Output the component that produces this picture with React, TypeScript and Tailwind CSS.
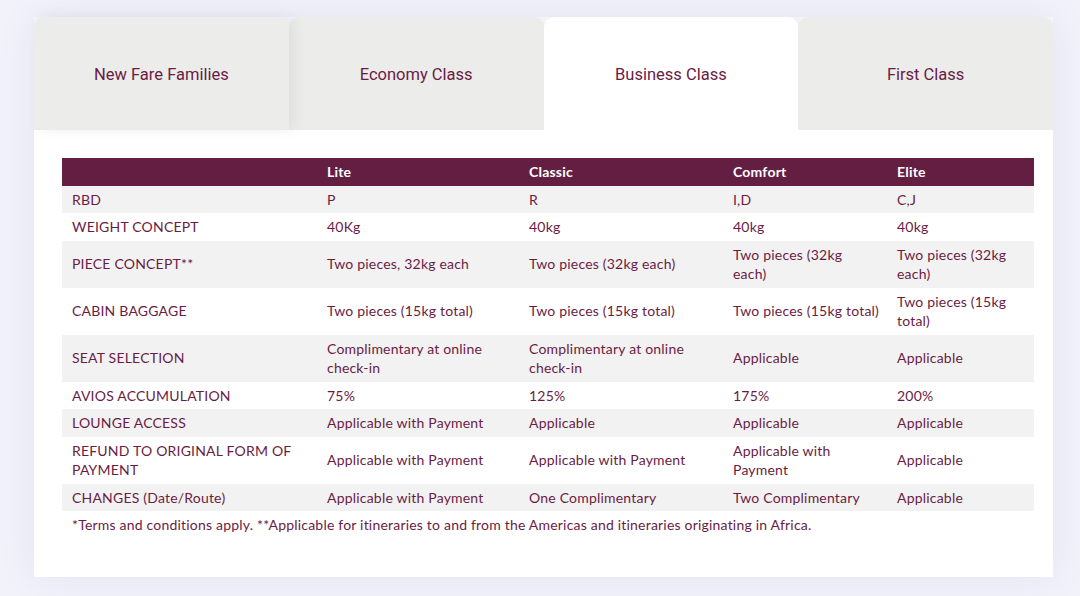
import React from 'react';

const TABS = ['New Fare Families', 'Economy Class', 'Business Class', 'First Class'];
const ACTIVE = 2;

const HEAD = ['', 'Lite', 'Classic', 'Comfort', 'Elite'];

// '\n' forces the wrap the original layout shows
const ROWS: string[][] = [
  ['RBD', 'P', 'R', 'I,D', 'C,J'],
  ['WEIGHT CONCEPT', '40Kg', '40kg', '40kg', '40kg'],
  ['PIECE CONCEPT**', 'Two pieces, 32kg each', 'Two pieces (32kg each)', 'Two pieces (32kg\neach)', 'Two pieces (32kg each)'],
  ['CABIN BAGGAGE', 'Two pieces (15kg total)', 'Two pieces (15kg total)', 'Two pieces (15kg total)', 'Two pieces (15kg total)'],
  ['SEAT SELECTION', 'Complimentary at online check-in', 'Complimentary at online check-in', 'Applicable', 'Applicable'],
  ['AVIOS ACCUMULATION', '75%', '125%', '175%', '200%'],
  ['LOUNGE ACCESS', 'Applicable with Payment', 'Applicable', 'Applicable', 'Applicable'],
  ['REFUND TO ORIGINAL FORM OF PAYMENT', 'Applicable with Payment', 'Applicable with Payment', 'Applicable with\nPayment', 'Applicable'],
  ['CHANGES (Date/Route)', 'Applicable with Payment', 'One Complimentary', 'Two Complimentary', 'Applicable'],
];

const WIDTHS = ['w-[255px]', 'w-[202px]', 'w-[204px]', 'w-[164px]', 'w-[147px]'];

export default function App() {
  return (
    <div className="min-h-[596px] bg-[#f1f2fa] pt-[17px] px-[34px] pb-[19px]">
      <div className="w-[1019px] shadow-[0_0_40px_rgba(40,40,80,0.07)]">
        <div className="flex h-[113px]">
          {TABS.map((t, i) => (
            <div
              key={t}
              className={
                'flex-1 flex items-center justify-center pt-[4px] rounded-t-[10px] text-[16.5px] text-[#6a1c44] ' +
                (i === ACTIVE
                  ? 'bg-white'
                  : i === 0
                    ? 'bg-[#ececeb] shadow-[6px_0_14px_rgba(0,0,0,0.06)] relative z-10'
                    : 'bg-[#ececeb]')
              }
              style={{ fontFamily: 'Roboto, "Noto Sans", sans-serif' }}
            >
              {t}
            </div>
          ))}
        </div>
        <div
          className="bg-white px-[28px] pt-[28px] pb-[42px] text-[14px] leading-[19.5px] tracking-[0.2px] text-[#6a1c44]"
          style={{ fontFamily: 'Lato, "Open Sans", sans-serif' }}
        >
          <table className="w-[972px] border-collapse table-fixed">
            <thead>
              <tr className="bg-[#641e42] text-white">
                {HEAD.map((h, i) => (
                  <th key={i} className={WIDTHS[i] + ' text-left font-bold px-[10px] py-[4px]'}>
                    {h}
                  </th>
                ))}
              </tr>
            </thead>
            <tbody>
              {ROWS.map((r, ri) => (
                <tr key={ri} className={ri % 2 === 0 ? 'bg-[#f2f2f2]' : 'bg-white'}>
                  {r.map((c, ci) => (
                    <td
                      key={ci}
                      className={
                        'py-[4px] align-middle whitespace-pre-line ' +
                        (ci === 3 ? 'pl-[10px] pr-0' : 'px-[10px]')
                      }
                    >
                      {c}
                    </td>
                  ))}
                </tr>
              ))}
            </tbody>
          </table>
          <p className="mt-[4px] px-[10px]">
            *Terms and conditions apply. **Applicable for itineraries to and from the Americas and itineraries originating in Africa.
          </p>
        </div>
      </div>
    </div>
  );
}
